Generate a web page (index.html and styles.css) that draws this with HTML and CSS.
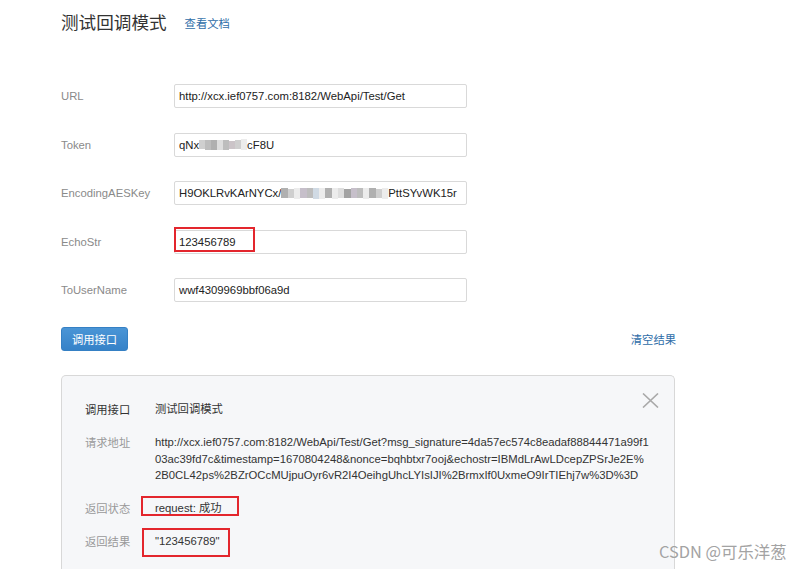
FILE: index.html
```html
<!DOCTYPE html>
<html lang="zh-CN">
<head>
<meta charset="utf-8">
<title>测试回调模式</title>
<link rel="stylesheet" href="styles.css">
</head>
<body>
<div class="page">
  <div class="head">
    <h1 class="title">测试回调模式</h1>
    <a class="doc-link" href="#">查看文档</a>
  </div>

  <div class="form">
    <div class="row">
      <label class="lbl">URL</label>
      <div class="field"><span class="val">http://xcx.ief0757.com:8182/WebApi/Test/Get</span></div>
    </div>
    <div class="row">
      <label class="lbl">Token</label>
      <div class="field"><span class="val">qNx</span><span class="mosaic mosaic-s"><i class="b b1"></i><i class="b b2"></i><i class="b b3"></i><i class="b b4"></i><i class="b b2"></i><i class="b b5"></i><i class="b b1"></i><i class="b b6"></i></span><span class="val">cF8U</span></div>
    </div>
    <div class="row">
      <label class="lbl">EncodingAESKey</label>
      <div class="field"><span class="val">H9OKLRvKArNYCx/</span><span class="mosaic mosaic-l"><i class="b b3"></i><i class="b b1"></i><i class="b b6"></i><i class="b b7"></i><i class="b b2"></i><i class="b b8"></i><i class="b b6"></i><i class="b b3"></i><i class="b b6"></i><i class="b b4"></i><i class="b b9"></i><i class="b b7"></i><i class="b b2"></i><i class="b b6"></i><i class="b b3"></i><i class="b b1"></i><i class="b b6"></i></span><span class="val">PttSYvWK15r</span></div>
    </div>
    <div class="row">
      <label class="lbl">EchoStr</label>
      <div class="field"><span class="val">123456789</span><span class="mark mark-echo"></span></div>
    </div>
    <div class="row">
      <label class="lbl">ToUserName</label>
      <div class="field"><span class="val">wwf4309969bbf06a9d</span></div>
    </div>
  </div>

  <div class="actions">
    <button class="btn" type="button">调用接口</button>
    <a class="clear-link" href="#">清空结果</a>
  </div>

  <div class="panel">
    <span class="close">
      <svg width="17" height="15" viewBox="0 0 17 15"><path d="M1 0.5 L16 14.5 M16 0.5 L1 14.5" stroke="#a9a9a9" stroke-width="1.6" fill="none"/></svg>
    </span>
    <div class="prow">
      <span class="plbl strong">调用接口</span>
      <span class="pval">测试回调模式</span>
    </div>
    <div class="prow">
      <span class="plbl">请求地址</span>
      <span class="pval">http://xcx.ief0757.com:8182/WebApi/Test/Get?msg_signature=4da57ec574c8eadaf88844471a99f1<br>03ac39fd7c&amp;timestamp=1670804248&amp;nonce=bqhbtxr7ooj&amp;echostr=IBMdLrAwLDcepZPSrJe2E%<br>2B0CL42ps%2BZrOCcMUjpuOyr6vR2I4OeihgUhcLYIsIJI%2BrmxIf0UxmeO9IrTIEhj7w%3D%3D</span>
    </div>
    <div class="prow">
      <span class="plbl">返回状态</span>
      <span class="pval rel">request: 成功<span class="mark mark-status"></span></span>
    </div>
    <div class="prow">
      <span class="plbl">返回结果</span>
      <span class="pval rel">"123456789"<span class="mark mark-result"></span></span>
    </div>
  </div>
</div>
<div class="watermark">CSDN @可乐洋葱</div>
</body>
</html>
```

FILE: styles.css
```css
html, body {
  margin: 0;
  padding: 0;
  background: #fff;
  overflow: hidden;
}

body {
  width: 810px;
  height: 569px;
  position: relative;
  font-family: "Liberation Sans", Arial, "Noto Sans CJK SC", sans-serif;
  font-size: 11.3px;
  color: #333;
}

.page {
  padding: 10px 0 0 61px;
  width: 615px;
}

.head {
  display: flex;
  align-items: center;
  gap: 18px;
  height: 24px;
}

.title {
  margin: 0;
  font-family: "Noto Sans CJK SC", sans-serif;
  font-weight: 400;
  font-size: 17.6px;
  line-height: 24px;
  color: #333;
}

.doc-link {
  font-family: "Noto Sans CJK SC", sans-serif;
  font-size: 11.3px;
  color: #2e6da8;
  text-decoration: none;
  margin-top: 2px;
}

.form {
  margin-top: 50px;
  display: flex;
  flex-direction: column;
  gap: 24.5px;
}

.row {
  display: flex;
  align-items: center;
  height: 24px;
}

.lbl {
  width: 113px;
  color: #8a8a8a;
  font-size: 11.3px;
}

.field {
  position: relative;
  box-sizing: border-box;
  width: 293px;
  height: 24px;
  border: 1px solid #d9d9d9;
  border-radius: 2px;
  padding: 0 4px;
  display: flex;
  align-items: center;
  color: #222;
  white-space: nowrap;
}

.mosaic {
  display: inline-flex;
  align-items: center;
  height: 12px;
}

.mosaic-s { width: 48px; }
.mosaic-l { width: 107px; }

.b {
  display: block;
  flex: 1;
  height: 10px;
}

.b1 { background: #cfcfcf; height: 9px; }
.b2 { background: #bdbdbd; }
.b3 { background: #b0b0b0; height: 10px; }
.b4 { background: #dedede; }
.b5 { background: #cbc4c8; height: 8px; }
.b6 { background: #ececec; height: 11px; }
.b7 { background: #c6bfca; }
.b8 { background: #d0dae4; height: 11px; }
.b9 { background: #a3a3a3; height: 9px; }

.mark {
  position: absolute;
  box-sizing: border-box;
  border: 2px solid #e3262d;
  pointer-events: none;
}

.mark-echo {
  left: -1px;
  top: -4px;
  width: 81px;
  height: 25px;
}

.actions {
  margin-top: 25px;
  display: flex;
  justify-content: space-between;
  align-items: center;
  height: 24px;
}

.btn {
  width: 67px;
  height: 24px;
  border: 1px solid #3580c4;
  border-radius: 3px;
  background: linear-gradient(#4a95d6, #3682c8);
  color: #fff;
  font-family: "Noto Sans CJK SC", sans-serif;
  font-size: 11.3px;
  padding: 0;
}

.clear-link {
  font-family: "Noto Sans CJK SC", sans-serif;
  font-size: 11.3px;
  color: #2e6da8;
  text-decoration: none;
}

.panel {
  position: relative;
  box-sizing: border-box;
  margin-top: 24px;
  width: 614px;
  height: 194px;
  background: #f6f7f9;
  border: 1px solid #d8d8d8;
  border-bottom: 0;
  border-radius: 5px 5px 0 0;
  padding: 25px 0 0 23px;
}

.close {
  position: absolute;
  right: 15px;
  top: 17px;
  width: 17px;
  height: 15px;
  display: block;
}

.close svg { display: block; }

.prow {
  display: flex;
  line-height: 16.5px;
  margin-bottom: 16.5px;
}

.plbl {
  width: 70px;
  flex: none;
  color: #999;
  font-family: "Noto Sans CJK SC", sans-serif;
  font-size: 11.3px;
}

.plbl.strong { color: #333; }

.pval {
  color: #333;
  white-space: nowrap;
}

.rel { position: relative; }

.mark-status {
  left: -14px;
  top: -4px;
  width: 98px;
  height: 20px;
}

.mark-result {
  left: -13px;
  top: -5px;
  width: 88px;
  height: 29px;
}

.watermark {
  position: absolute;
  left: 659px;
  top: 540px;
  font-family: "Noto Sans CJK SC", sans-serif;
  font-size: 16.4px;
  line-height: 22px;
  color: #a3a3a3;
  text-shadow: 0 0 1px #fff;
  white-space: nowrap;
}
```
